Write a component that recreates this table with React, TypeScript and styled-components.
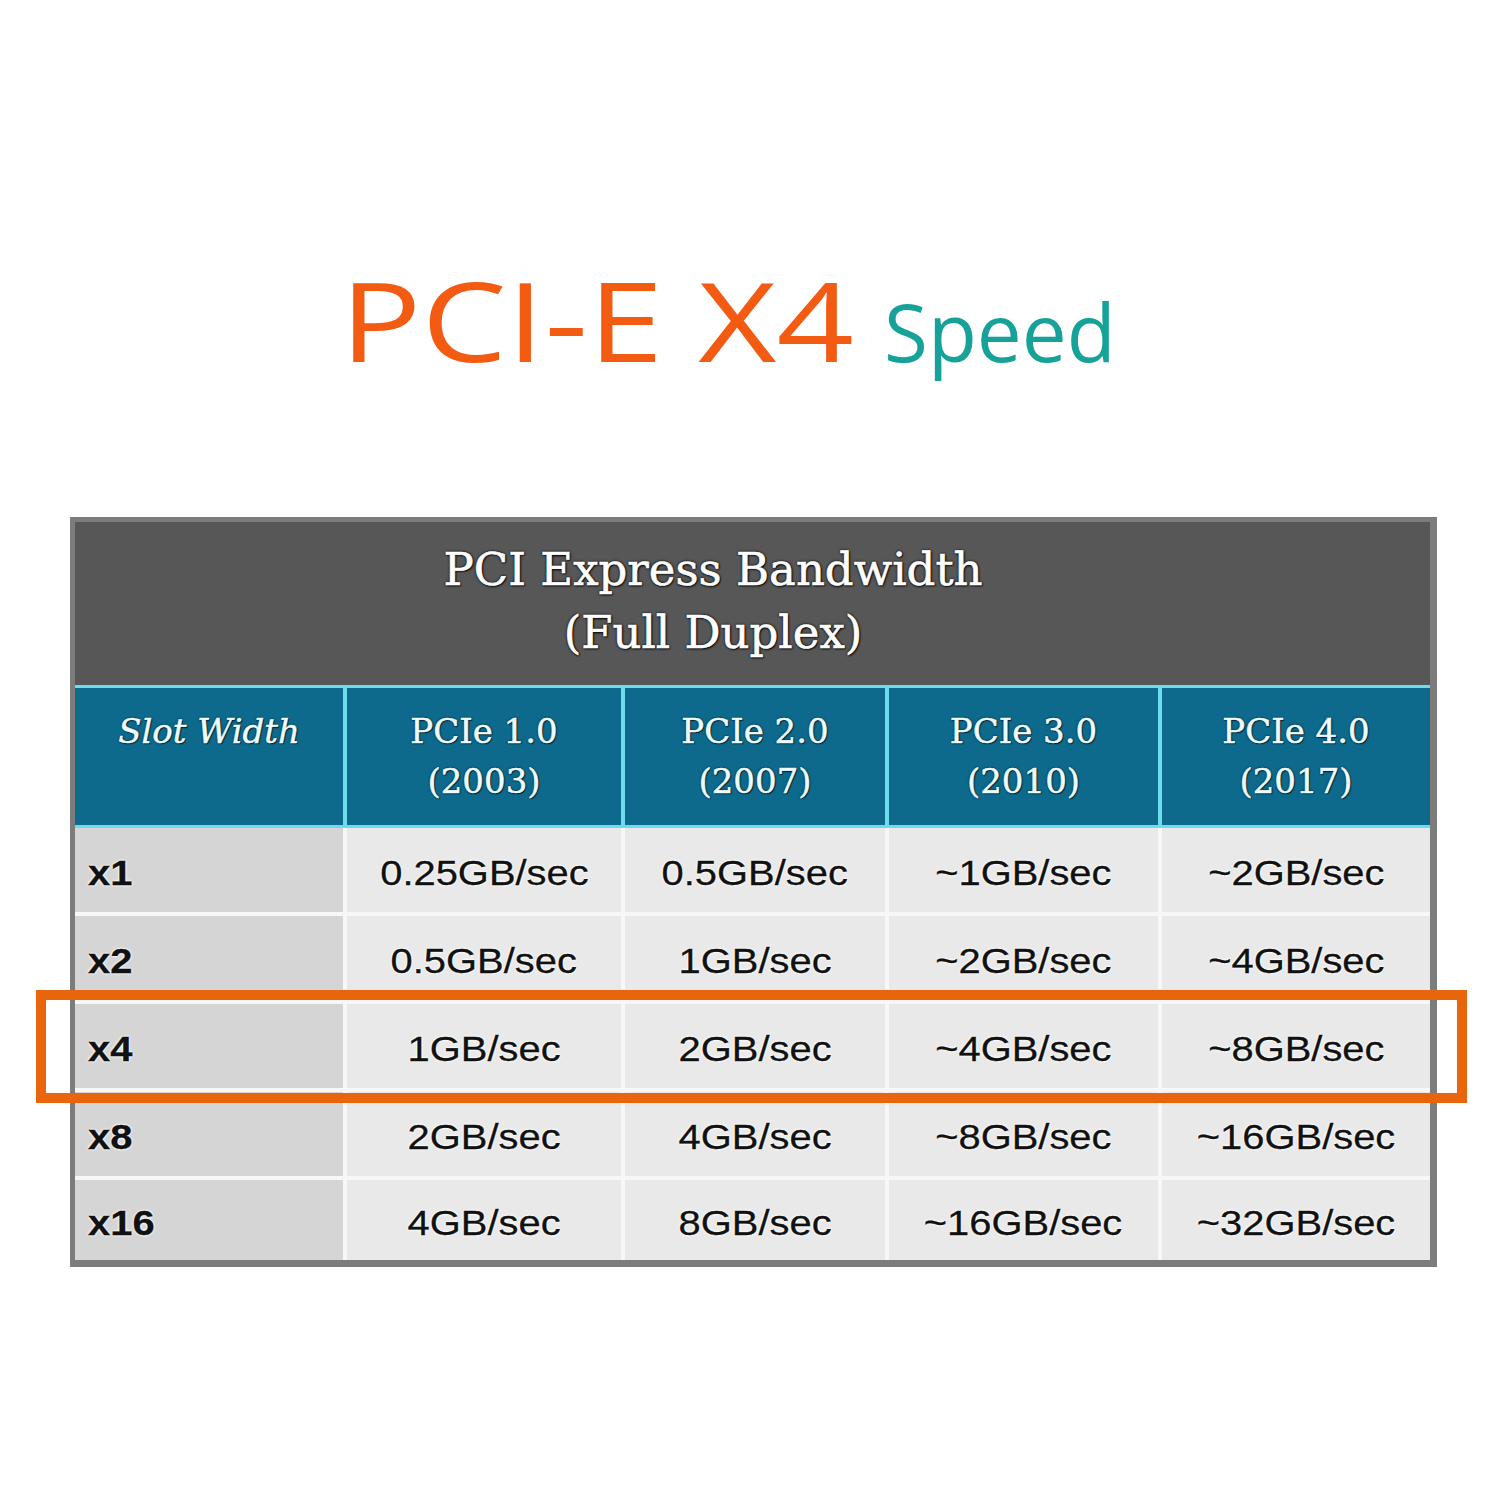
import React from "react";
import styled, { createGlobalStyle } from "styled-components";

const Global = createGlobalStyle`
  html, body { margin: 0; padding: 0; background: #ffffff; }
  body { width: 1500px; height: 1500px; overflow: hidden; }
`;

const Page = styled.div`
  width: 1500px;
  height: 1500px;
  background: #fff;
  display: flex;
  flex-direction: column;
`;

const TitleRow = styled.div`
  display: flex;
  align-items: baseline;
  justify-content: center;
  padding: 264px 44px 0 0;
  gap: 37px;
  height: 110px;
  line-height: 1;
`;

const MainTitle = styled.span`
  display: inline-block;
  font-family: "Open Sans", "Noto Sans", sans-serif;
  font-size: 110px;
  color: #f35b12;
  font-weight: 400;
  transform: scaleX(1.23);
  transform-origin: left center;
  margin-right: 89px;
`;

const SubTitle = styled.span`
  font-family: "Open Sans", "Noto Sans", sans-serif;
  font-size: 80px;
  color: #17a299;
  font-weight: 400;
`;

const TableWrap = styled.div`
  position: relative;
  margin: 143px 0 0 70px;
  width: 1367px;
  box-sizing: border-box;
  border-style: solid;
  border-color: #7c7c7c;
  border-width: 5px 7px 7px 5px;
  background: #575757;
`;

const Banner = styled.div`
  height: 163px;
  box-sizing: border-box;
  padding: 16px 79px 0 0;
  text-align: center;
  font-family: "DejaVu Serif", serif;
  font-size: 45px;
  line-height: 63px;
  color: #ffffff;
  -webkit-text-stroke: 0.6px #ffffff;
  text-shadow: 0 0 2px #111, 0 0 3px #111, 1px 1px 2px #000;
`;

const HeadGrid = styled.div`
  display: grid;
  grid-template-columns: 268px 274px 260px 269px 268px;
  column-gap: 4px;
  padding: 3px 0 3px;
  background: #6fdcec;
`;

const HeadCell = styled.div<{ $italic?: boolean }>`
  height: 137px;
  box-sizing: border-box;
  padding-top: 18px;
  background: #0d6a8c;
  text-align: center;
  font-family: "DejaVu Serif", serif;
  font-style: ${(p) => (p.$italic ? "italic" : "normal")};
  font-size: 34px;
  line-height: 50px;
  color: #eefcff;
  -webkit-text-stroke: 0.5px #eefcff;
  text-shadow: 0 0 2px #062a3a, 0 0 2px #062a3a, 1px 1px 1px #031a24;
`;

const BodyGrid = styled.div`
  display: grid;
  grid-template-columns: 268px 274px 260px 269px 268px;
  grid-template-rows: repeat(4, 84px) 80px;
  gap: 4px;
  background: #f7f7f7;
`;

const Cell = styled.div<{ $first?: boolean }>`
  box-sizing: border-box;
  padding-top: 6px;
  display: flex;
  align-items: center;
  justify-content: ${(p) => (p.$first ? "flex-start" : "center")};
  padding-left: ${(p) => (p.$first ? "13px" : "0")};
  background: ${(p) => (p.$first ? "#d5d5d5" : "#e9e9e9")};
`;

const CellText = styled.span<{ $bold?: boolean }>`
  display: inline-block;
  transform: scaleX(1.14);
  transform-origin: ${(p) => (p.$bold ? "left center" : "center center")};
  font-family: "Liberation Sans", Arial, sans-serif;
  font-size: 35px;
  font-weight: ${(p) => (p.$bold ? 700 : 400)};
  color: #111;
  -webkit-text-stroke: 0.3px #111;
  text-shadow: 0 0 2px #fff, 0 0 2px #fff, 0 0 3px #fff;
`;

const Highlight = styled.div`
  position: absolute;
  left: -39px;
  top: 468px;
  width: 1431px;
  height: 113px;
  box-sizing: border-box;
  border: 10px solid #e9650c;
  pointer-events: none;
`;

const heads: { l1: string; l2?: string; italic?: boolean }[] = [
  { l1: "Slot Width", italic: true },
  { l1: "PCIe 1.0", l2: "(2003)" },
  { l1: "PCIe 2.0", l2: "(2007)" },
  { l1: "PCIe 3.0", l2: "(2010)" },
  { l1: "PCIe 4.0", l2: "(2017)" },
];

const rows: string[][] = [
  ["x1", "0.25GB/sec", "0.5GB/sec", "~1GB/sec", "~2GB/sec"],
  ["x2", "0.5GB/sec", "1GB/sec", "~2GB/sec", "~4GB/sec"],
  ["x4", "1GB/sec", "2GB/sec", "~4GB/sec", "~8GB/sec"],
  ["x8", "2GB/sec", "4GB/sec", "~8GB/sec", "~16GB/sec"],
  ["x16", "4GB/sec", "8GB/sec", "~16GB/sec", "~32GB/sec"],
];

export default function App() {
  return (
    <Page>
      <Global />
      <TitleRow>
        <MainTitle>PCI-E X4</MainTitle>
        <SubTitle>Speed</SubTitle>
      </TitleRow>
      <TableWrap>
        <Banner>
          PCI Express Bandwidth
          <br />
          (Full Duplex)
        </Banner>
        <HeadGrid>
          {heads.map((h) => (
            <HeadCell key={h.l1} $italic={h.italic}>
              {h.l1}
              {h.l2 && (
                <>
                  <br />
                  {h.l2}
                </>
              )}
            </HeadCell>
          ))}
        </HeadGrid>
        <BodyGrid>
          {rows.map((r) =>
            r.map((v, i) => (
              <Cell key={r[0] + i} $first={i === 0}>
                <CellText $bold={i === 0}>{v}</CellText>
              </Cell>
            ))
          )}
        </BodyGrid>
        <Highlight />
      </TableWrap>
    </Page>
  );
}
